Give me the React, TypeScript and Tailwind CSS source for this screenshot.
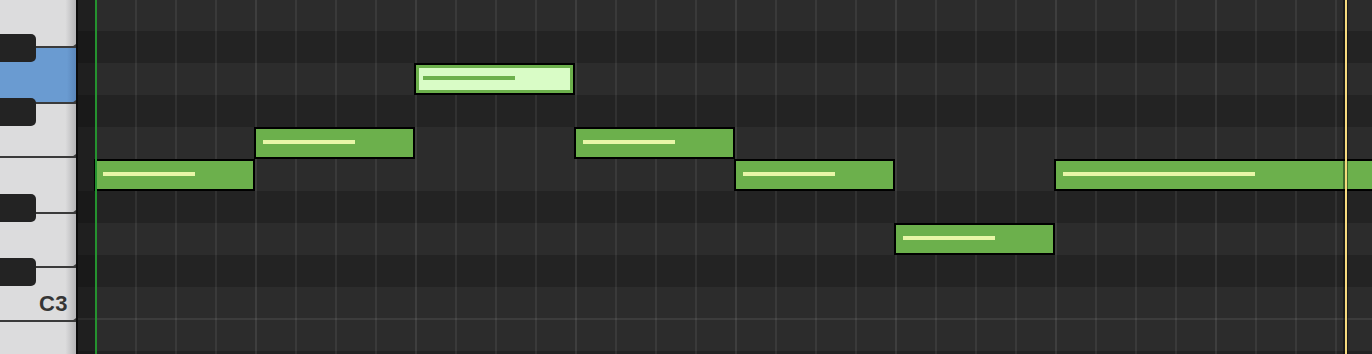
import React from "react";

type Note = { col: number; row: number; len?: number; vel: number; selected?: boolean };

const notes: Note[] = [
  { col: 0, row: 5, vel: 92 },
  { col: 1, row: 4, vel: 92 },
  { col: 2, row: 2, vel: 92, selected: true },
  { col: 3, row: 4, vel: 92 },
  { col: 4, row: 5, vel: 92 },
  { col: 5, row: 7, vel: 92 },
  { col: 6, row: 5, vel: 192, len: 400 },
];

const rows = [
  { h: "h-[31px]", dark: false },
  { h: "h-[32px]", dark: true },
  { h: "h-[32px]", dark: false },
  { h: "h-[32px]", dark: true },
  { h: "h-[32px]", dark: false },
  { h: "h-[32px]", dark: false },
  { h: "h-[32px]", dark: true },
  { h: "h-[32px]", dark: false },
  { h: "h-[32px]", dark: true },
  { h: "h-[32px]", dark: false, octaveBottom: true },
  { h: "h-[32px]", dark: false, octaveTop: true },
  { h: "h-[3px]", dark: true },
];

const whiteKeys = [
  { h: "h-[48px]", blue: false, label: "" },
  { h: "h-[56px]", blue: true, label: "" },
  { h: "h-[54px]", blue: false, label: "" },
  { h: "h-[56px]", blue: false, label: "" },
  { h: "h-[54px]", blue: false, label: "" },
  { h: "h-[54px]", blue: false, label: "C3" },
  { h: "h-[32px]", blue: false, label: "", last: true },
];

const blackKeyTops = ["top-[34px]", "top-[98px]", "top-[194px]", "top-[258px]"];

function Piano() {
  return (
    <div className="relative w-[76px] h-full shrink-0 flex flex-col overflow-hidden">
      {whiteKeys.map((k, i) => (
        <div
          key={i}
          className={`relative shrink-0 ${k.h} ${k.last ? "" : "border-b-2 border-[#3a3a3a]"} ${
            k.blue
              ? "bg-[linear-gradient(90deg,#6a9bd1_0%,#6a9bd1_88%,#5a86ba_100%)]"
              : "bg-[linear-gradient(90deg,#dcdcdd_0%,#dcdcdd_86%,#b4b4b6_100%)]"
          } flex items-end justify-end pr-[8px] pb-[5px]`}
        >
          {k.label && (
            <span className="font-['Liberation_Sans',Arial,sans-serif] font-bold text-[22px] leading-none tracking-[0.5px] text-[#353535]">
              {k.label}
            </span>
          )}
          {!k.last && (
            <div className="absolute right-0 bottom-[-4px] w-0 h-0 border-y-[3px] border-y-transparent border-r-[4px] border-r-[#3a3a3a]" />
          )}
        </div>
      ))}
      {blackKeyTops.map((t, i) => (
        <div key={i} className={`absolute left-0 ${t} w-[36px] h-[28px] bg-[#232323] rounded-r-[5px]`} />
      ))}
    </div>
  );
}

function NoteBlock({ n }: { n: Note }) {
  const left = 16 + n.col * 160;
  const top = 32 * n.row - 1;
  const width = n.len ?? 161;
  return (
    <div
      className={`absolute h-[32px] border-2 border-black ${
        n.selected ? "bg-[#d9fcc6] shadow-[inset_0_0_0_3px_#6cb04c]" : "bg-[#6cb04c]"
      }`}
      style={{ left, top, width }}
    >
      <div
        className={`absolute top-[11px] left-[7px] h-[4px] ${n.selected ? "bg-[#6cb04c]" : "bg-[#e8f6a8]"}`}
        style={{ width: n.vel }}
      />
    </div>
  );
}

export default function App() {
  const cols = Array.from({ length: 33 }, (_, i) => i);
  return (
    <div className="w-[1372px] h-[354px] flex bg-[#2c2c2c] overflow-hidden">
      <Piano />
      <div className="w-[2px] h-full bg-[#0b0b0b] shrink-0" />
      <div className="relative flex-1 h-full overflow-hidden">
        {/* row lanes */}
        <div className="flex flex-col">
          {rows.map((r, i) => (
            <div
              key={i}
              className={`shrink-0 ${r.h} ${r.dark ? "bg-[#232323]" : "bg-[#2c2c2c]"} ${
                r.octaveBottom ? "shadow-[inset_0_-1px_0_rgba(255,255,255,0.08)]" : ""
              } ${r.octaveTop ? "shadow-[inset_0_1px_0_rgba(255,255,255,0.08)]" : ""}`}
            />
          ))}
        </div>
        {/* vertical grid lines */}
        <div className="absolute inset-0 flex pl-[17px]">
          {cols.map((c) => (
            <div
              key={c}
              className={`shrink-0 w-[40px] h-full border-l-2 ${
                c % 4 === 0 ? "border-[rgba(255,255,255,0.085)]" : "border-[rgba(255,255,255,0.065)]"
              }`}
            />
          ))}
        </div>
        {/* area before region start */}
        <div className="absolute left-0 top-0 w-[17px] h-full bg-[rgba(0,0,0,0.28)]" />
        {/* notes */}
        {notes.map((n, i) => (
          <NoteBlock key={i} n={n} />
        ))}
        {/* region start line */}
        <div className="absolute left-[17px] top-0 w-[2px] h-full bg-[#25922f]" />
        {/* playhead */}
        <div className="absolute left-[1265px] top-0 w-[5px] h-full flex">
          <div className="w-[2px] h-full bg-[rgba(0,0,0,0.4)]" />
          <div className="w-[2px] h-full bg-[#f6da7e]" />
          <div className="w-[1px] h-full bg-[rgba(0,0,0,0.4)]" />
        </div>
      </div>
    </div>
  );
}
